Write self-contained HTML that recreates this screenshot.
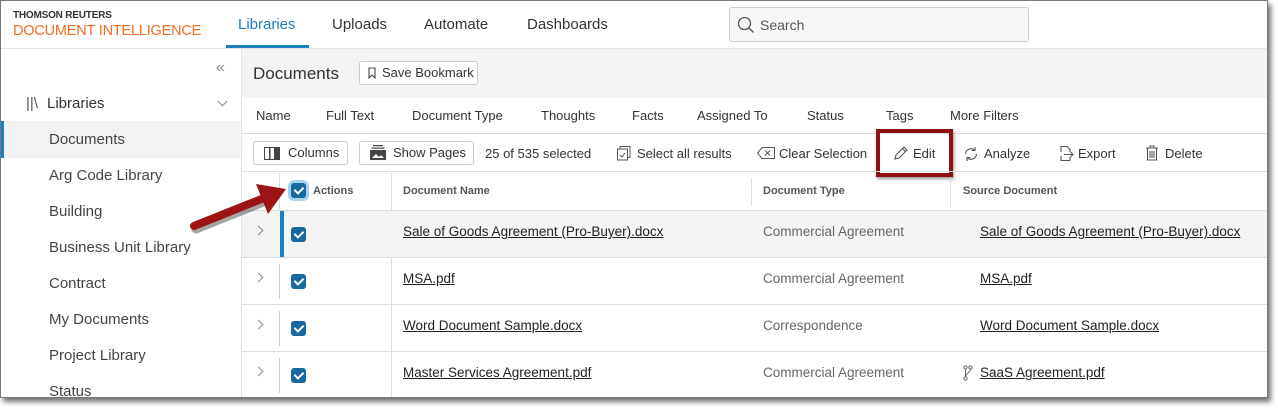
<!DOCTYPE html>
<html><head><meta charset="utf-8"><style>
*{box-sizing:border-box;margin:0;padding:0}
body{width:1278px;height:408px;background:#fff;font-family:"Liberation Sans",sans-serif;color:#333;position:relative;overflow:hidden}
.a{position:absolute;white-space:nowrap}
#frame{position:absolute;left:0;top:0;width:1268px;height:398px;border:1px solid #777;box-shadow:3px 4px 5px rgba(0,0,0,.55);background:#fff;overflow:hidden}
.nav{font-size:15px;color:#333;top:15px}
.side{font-size:15px;color:#444;left:48px}
.flt{font-size:13px;color:#333;top:107px}
.tb{font-size:13px;color:#333;top:145px}
.btn{position:absolute;border:1px solid #ccc;border-radius:3px;background:#fff;font-size:13px;color:#333;height:24px;line-height:22px}
.th{font-size:11px;font-weight:bold;color:#555;top:184px}
.cb{position:absolute;width:15px;height:15px;border-radius:3px;background:#17699e}
.cb:after{content:"";position:absolute;left:4.5px;top:2px;width:4px;height:7px;border:solid #fff;border-width:0 2px 2px 0;transform:rotate(45deg)}
.lk{font-size:13.5px;color:#222;text-decoration:underline}
.ty{font-size:13.5px;color:#666}
.hl{position:absolute;height:1px;background:#ddd}
.vl{position:absolute;width:1px;background:#ddd}
.chev{position:absolute;width:7px;height:7px;border:solid #888;border-width:1px 1px 0 0;transform:rotate(45deg)}
</style></head><body>
<div id="frame">
<div class="a" style="left:12px;top:9px;font-size:10px;font-weight:bold;color:#333;letter-spacing:-.2px">THOMSON REUTERS</div>
<div class="a" style="left:12px;top:22px;font-size:14.5px;color:#f26b21;letter-spacing:-.2px">DOCUMENT INTELLIGENCE</div>
<div class="a nav" style="left:237px;color:#1b7fc0">Libraries</div>
<div class="a" style="left:225px;top:44px;width:83px;height:3px;background:#1b7fc0"></div>
<div class="a nav" style="left:331px">Uploads</div>
<div class="a nav" style="left:423px">Automate</div>
<div class="a nav" style="left:526px">Dashboards</div>
<div class="a" style="left:728px;top:6px;width:300px;height:35px;border:1px solid #ccc;border-radius:3px;background:#f7f7f7"></div>
<svg class="a" style="left:736px;top:15px" width="18" height="18" viewBox="0 0 18 18"><circle cx="7.5" cy="7.5" r="6" fill="none" stroke="#555" stroke-width="1.3"/><path d="M12 12l4.5 4.5" stroke="#555" stroke-width="1.3"/></svg>
<div class="a" style="left:759px;top:16px;font-size:14px;color:#555">Search</div>
<div class="hl" style="left:0;top:47px;width:1268px;background:#e4e4e4"></div>
<div class="a" style="left:215px;top:58px;font-size:16px;color:#888">«</div>
<div class="a" style="left:25px;top:94px;font-size:15px;color:#555">||\</div>
<div class="a" style="left:46px;top:94px;font-size:15px;color:#333">Libraries</div>
<div class="chev" style="left:218px;top:97px;transform:rotate(135deg)"></div>
<div class="a" style="left:0;top:120px;width:240px;height:37px;background:#f2f2f2"></div>
<div class="a" style="left:0;top:120px;width:3px;height:37px;background:#1b7fc0"></div>
<div class="a side" style="top:130px">Documents</div>
<div class="a side" style="top:166px">Arg Code Library</div>
<div class="a side" style="top:202px">Building</div>
<div class="a side" style="top:238px">Business Unit Library</div>
<div class="a side" style="top:274px">Contract</div>
<div class="a side" style="top:310px">My Documents</div>
<div class="a side" style="top:346px">Project Library</div>
<div class="a side" style="top:382px">Status</div>
<div class="vl" style="left:240px;top:48px;height:350px;background:#e4e4e4"></div>
<div class="a" style="left:241px;top:48px;width:1027px;height:49px;background:#f4f4f4"></div>
<div class="a" style="left:252px;top:63px;font-size:17px;color:#333">Documents</div>
<div class="btn" style="left:358px;top:60px;width:119px;padding-left:22px">Save Bookmark</div>
<svg class="a" style="left:367px;top:66px" width="8" height="12"><path d="M1 1h6v10l-3-3-3 3z" fill="none" stroke="#444" stroke-width="1.1"/></svg>
<div class="a flt" style="left:255px">Name</div>
<div class="a flt" style="left:325px">Full Text</div>
<div class="a flt" style="left:411px">Document Type</div>
<div class="a flt" style="left:540px">Thoughts</div>
<div class="a flt" style="left:631px">Facts</div>
<div class="a flt" style="left:696px">Assigned To</div>
<div class="a flt" style="left:806px">Status</div>
<div class="a flt" style="left:885px">Tags</div>
<div class="a flt" style="left:949px">More Filters</div>
<div class="hl" style="left:241px;top:132px;width:1027px"></div>
<div class="btn" style="left:252px;top:140px;width:95px;padding-left:34px">Columns</div>
<svg class="a" style="left:263px;top:146px" width="16" height="13"><rect x=".5" y=".5" width="15" height="12" fill="none" stroke="#444"/><rect x="5" y="1" width="1.5" height="11" fill="#444"/><rect x="10" y="1" width="1.5" height="11" fill="#444"/><rect x="11" y="1" width="4" height="11" fill="#444"/></svg>
<div class="btn" style="left:358px;top:140px;width:115px;padding-left:33px">Show Pages</div>
<svg class="a" style="left:369px;top:144px" width="16" height="15"><rect x="3" y="0" width="10" height="1.2" fill="#444"/><rect x="1.5" y="2.5" width="13" height="1.2" fill="#444"/><rect x="0" y="5" width="16" height="10" fill="#444"/><path d="M2 13l4-4 3 3 2-2 3 3z" fill="#fff"/></svg>
<div class="a tb" style="left:484px">25 of 535 selected</div>
<svg class="a" style="left:616px;top:145px" width="14" height="15"><rect x="3" y=".5" width="10" height="11" fill="none" stroke="#555"/><rect x=".5" y="3" width="10" height="11" fill="#fff" stroke="#555"/><path d="M3 9l2 2 3-4" fill="none" stroke="#555"/></svg>
<div class="a tb" style="left:636px">Select all results</div>
<svg class="a" style="left:756px;top:146px" width="18" height="12"><path d="M5 .5h12.5v11H5L.5 6z" fill="none" stroke="#555"/><path d="M8 3.5l5 5M13 3.5l-5 5" stroke="#555"/></svg>
<div class="a tb" style="left:778px">Clear Selection</div>
<div class="a" style="left:875px;top:128px;width:77px;height:48px;border:4px solid #8e1010;box-shadow:1px 2px 3px rgba(0,0,0,.4)"></div>
<svg class="a" style="left:892px;top:145px" width="15" height="15"><path d="M2 13l1-4 8-8 3 3-8 8z M9.5 2.5l3 3" fill="none" stroke="#555" stroke-width="1.1"/></svg>
<div class="a tb" style="left:912px">Edit</div>
<svg class="a" style="left:962px;top:145px" width="16" height="16"><path d="M2.5 8A5.5 5.5 0 0 1 12 4.5M13.5 8A5.5 5.5 0 0 1 4 11.5M12 1v3.5H8.5M4 15v-3.5h3.5" fill="none" stroke="#555" stroke-width="1.1"/></svg>
<div class="a tb" style="left:983px">Analyze</div>
<svg class="a" style="left:1057px;top:145px" width="16" height="15"><path d="M3 6V.5h6l3 3V6M3 10v4.5h9V11M6 8.5h9M12.5 6l2.5 2.5-2.5 2.5" fill="none" stroke="#555" stroke-width="1.1"/></svg>
<div class="a tb" style="left:1077px">Export</div>
<svg class="a" style="left:1144px;top:144px" width="14" height="16"><path d="M1 3h12M5 3V1h4v2M2.5 3v12h9V3M5 6v7M7 6v7M9 6v7" fill="none" stroke="#555" stroke-width="1.1"/></svg>
<div class="a tb" style="left:1164px">Delete</div>
<div class="hl" style="left:241px;top:170px;width:1027px"></div>
<div class="vl" style="left:278px;top:172px;height:38px"></div>
<div class="vl" style="left:390px;top:172px;height:226px"></div>
<div class="vl" style="left:750px;top:177px;height:28px"></div>
<div class="vl" style="left:949px;top:177px;height:28px"></div>
<div class="cb" style="left:290px;top:182px;box-shadow:0 0 0 3px #a9d4f0"></div>
<div class="a th" style="left:312px">Actions</div>
<div class="a th" style="left:402px">Document Name</div>
<div class="a th" style="left:762px">Document Type</div>
<div class="a th" style="left:962px">Source Document</div>
<div class="hl" style="left:241px;top:209px;width:1027px"></div>
<div class="a" style="left:241px;top:210px;width:1027px;height:46px;background:#f4f4f4"></div>
<div class="a" style="left:279px;top:210px;width:4px;height:46px;background:#1b7fc0"></div>
<div class="hl" style="left:241px;top:256px;width:1027px"></div>
<div class="hl" style="left:241px;top:303px;width:1027px"></div>
<div class="hl" style="left:241px;top:350px;width:1027px"></div>
<div class="vl" style="left:278px;top:263px;height:35px;background:#ccc"></div>
<div class="vl" style="left:278px;top:310px;height:35px;background:#ccc"></div>
<div class="vl" style="left:278px;top:357px;height:35px;background:#ccc"></div>

<div class="chev" style="left:254px;top:226px"></div>
<div class="cb" style="left:290px;top:226px"></div>
<div class="a lk" style="left:402px;top:223px">Sale of Goods Agreement (Pro-Buyer).docx</div>
<div class="a ty" style="left:762px;top:223px">Commercial Agreement</div>
<div class="a lk" style="left:979px;top:223px">Sale of Goods Agreement (Pro-Buyer).docx</div>

<div class="chev" style="left:254px;top:273px"></div>
<div class="cb" style="left:290px;top:273px"></div>
<div class="a lk" style="left:402px;top:270px">MSA.pdf</div>
<div class="a ty" style="left:762px;top:270px">Commercial Agreement</div>
<div class="a lk" style="left:979px;top:270px">MSA.pdf</div>

<div class="chev" style="left:254px;top:320px"></div>
<div class="cb" style="left:290px;top:320px"></div>
<div class="a lk" style="left:402px;top:317px">Word Document Sample.docx</div>
<div class="a ty" style="left:762px;top:317px">Correspondence</div>
<div class="a lk" style="left:979px;top:317px">Word Document Sample.docx</div>

<div class="chev" style="left:254px;top:367px"></div>
<div class="cb" style="left:290px;top:367px"></div>
<div class="a lk" style="left:402px;top:364px">Master Services Agreement.pdf</div>
<div class="a ty" style="left:762px;top:364px">Commercial Agreement</div>
<svg class="a" style="left:962px;top:364px" width="10" height="16"><circle cx="2.5" cy="2.5" r="1.6" fill="none" stroke="#666"/><circle cx="7.5" cy="2.5" r="1.6" fill="none" stroke="#666"/><circle cx="2.5" cy="13.5" r="1.6" fill="none" stroke="#666"/><path d="M2.5 4v8M7.5 4c0 4-5 4-5 8" fill="none" stroke="#666"/></svg>
<div class="a lk" style="left:979px;top:364px">SaaS Agreement.pdf</div>

<svg class="a" style="left:185px;top:175px" width="110" height="70"><g transform="translate(2,3)" opacity=".35"><path d="M8 50L78 22" stroke="#000" stroke-width="9" stroke-linecap="round"/></g><path d="M8 50L78 22" stroke="#9c1414" stroke-width="8" stroke-linecap="round"/><path d="M100 13L70 8L82 38z" fill="#9c1414"/></svg>
</div>
</body></html>
